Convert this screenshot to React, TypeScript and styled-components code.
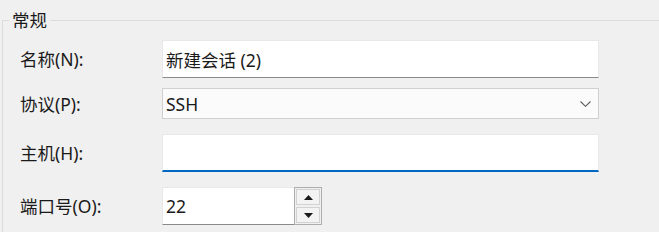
import styled, { createGlobalStyle } from "styled-components"

const GlobalStyle = createGlobalStyle`
    html, body {
        margin: 0;
        padding: 0;
        background: #f0f0f0;
        overflow: hidden;
    }
    body {
        font-family: "Noto Sans", "Noto Sans CJK SC", sans-serif;
        font-size: 17.5px;
        color: #1a1a1a;
    }
`

const Group = styled.div`
    position: relative;
    margin: 20px 0 0 2px;
    border: 1px solid #dcdcdc;
    border-right: none;
    padding: 19px 0 40px 17px;
`

const Legend = styled.span`
    position: absolute;
    top: -12px;
    left: 6px;
    padding: 0 3px;
    background: #f0f0f0;
    line-height: 22px;
`

const Form = styled.div`
    display: flex;
    flex-direction: column;
`

const Row = styled.div<{ $top: number; $height: number }>`
    display: grid;
    grid-template-columns: 142px auto;
    align-items: center;
    margin-top: ${({ $top }) => $top}px;
    height: ${({ $height }) => $height}px;
`

const Label = styled.label`
    line-height: 22px;
    white-space: nowrap;
`

const TextBox = styled.div<{ $focused?: boolean }>`
    box-sizing: border-box;
    width: 437px;
    height: 38px;
    background: #ffffff;
    border: 1px solid #e8e8e8;
    border-bottom: ${({ $focused }) => ($focused ? "2px solid #0067c0" : "1px solid #8a8a8a")};
    padding: 0 4px 0 3px;
    display: flex;
    align-items: center;
`

const Combo = styled.div`
    box-sizing: border-box;
    width: 437px;
    height: 31px;
    background: #fbfbfb;
    border: 1px solid #d0d0d0;
    padding: 0 7px 0 3px;
    display: flex;
    align-items: center;
    justify-content: space-between;
`

const SpinWrap = styled.div`
    display: flex;
    align-items: stretch;
    height: 38px;
`

const PortBox = styled.div`
    box-sizing: border-box;
    width: 132px;
    background: #ffffff;
    border: 1px solid #e8e8e8;
    border-right: none;
    border-bottom: 1px solid #8a8a8a;
    padding: 0 3px;
    display: flex;
    align-items: center;
`

const Spinner = styled.div`
    box-sizing: border-box;
    width: 28px;
    border: 1px solid #adadad;
    background: #f0f0f0;
    padding: 1px;
    display: flex;
    flex-direction: column;
    gap: 2px;
`

const SpinButton = styled.div`
    flex: 1;
    border: 1px solid #d2d2d2;
    background: #f3f3f3;
    display: flex;
    align-items: center;
    justify-content: center;
`

const Arrow = ({ down }: { down?: boolean }) => (
    <svg width="9" height="5" viewBox="0 0 9 5">
        {down ? <polygon points="0,0 9,0 4.5,5" fill="#1a1a1a" /> : <polygon points="4.5,0 9,5 0,5" fill="#1a1a1a" />}
    </svg>
)

const Chevron = () => (
    <svg width="11" height="6" viewBox="0 0 11 6">
        <polyline points="0.5,0.5 5.5,5.3 10.5,0.5" fill="none" stroke="#5a5a5a" strokeWidth="1.1" />
    </svg>
)

export default function App() {
    return (
        <>
            <GlobalStyle />
            <Group>
                <Legend>常规</Legend>
                <Form>
                    <Row $top={0} $height={38}>
                        <Label>名称(N):</Label>
                        <TextBox>新建会话 (2)</TextBox>
                    </Row>
                    <Row $top={10} $height={31}>
                        <Label>协议(P):</Label>
                        <Combo>
                            <span>SSH</span>
                            <Chevron />
                        </Combo>
                    </Row>
                    <Row $top={15} $height={38}>
                        <Label>主机(H):</Label>
                        <TextBox $focused />
                    </Row>
                    <Row $top={15} $height={38}>
                        <Label>端口号(O):</Label>
                        <SpinWrap>
                            <PortBox>22</PortBox>
                            <Spinner>
                                <SpinButton><Arrow /></SpinButton>
                                <SpinButton><Arrow down /></SpinButton>
                            </Spinner>
                        </SpinWrap>
                    </Row>
                </Form>
            </Group>
        </>
    )
}
